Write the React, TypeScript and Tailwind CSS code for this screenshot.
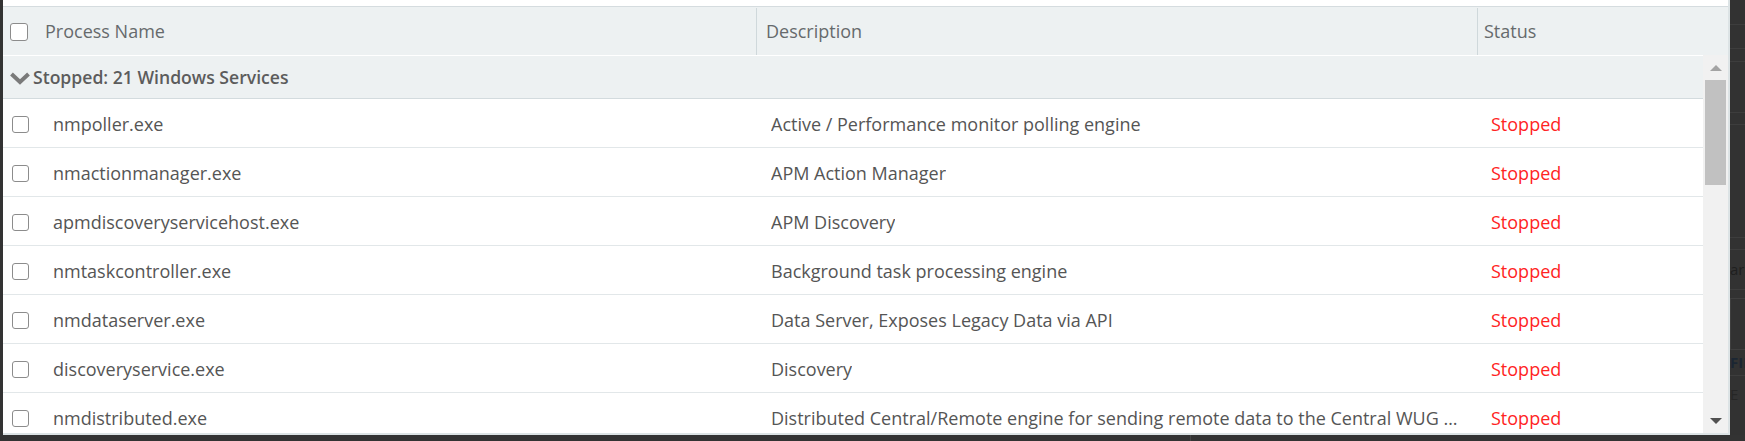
import React from 'react'

interface ServiceRow {
  name: string
  description: string
}

const rows: ServiceRow[] = [
  { name: 'nmpoller.exe', description: 'Active / Performance monitor polling engine' },
  { name: 'nmactionmanager.exe', description: 'APM Action Manager' },
  { name: 'apmdiscoveryservicehost.exe', description: 'APM Discovery' },
  { name: 'nmtaskcontroller.exe', description: 'Background task processing engine' },
  { name: 'nmdataserver.exe', description: 'Data Server, Exposes Legacy Data via API' },
  { name: 'discoveryservice.exe', description: 'Discovery' },
  {
    name: 'nmdistributed.exe',
    description: 'Distributed Central/Remote engine for sending remote data to the Central WUG\u00a0server',
  },
]

function Checkbox({ size = 'body' }: { size?: 'header' | 'body' }) {
  return (
    <span
      className={`inline-block shrink-0 rounded-[3px] border border-[#8c8c8c] bg-white ${
        size === 'header' ? 'h-[18px] w-[18px]' : 'h-[17px] w-[17px]'
      }`}
    />
  )
}

function ChevronDown() {
  return (
    <svg width="24" height="14" viewBox="0 0 24 14" className="shrink-0">
      <polyline
        points="3.5,3 12,11 20.5,3"
        fill="none"
        stroke="#7a7a7a"
        strokeWidth="4"
        strokeLinejoin="miter"
      />
    </svg>
  )
}

function Scrollbar() {
  return (
    <div className="flex w-[25px] shrink-0 flex-col bg-[#f1f1f1]">
      <div className="flex h-[25px] items-center justify-center">
        <svg width="14" height="8" viewBox="0 0 14 8">
          <polygon points="7,1 13,7 1,7" fill="#a3a3a3" />
        </svg>
      </div>
      <div className="mx-[2px] h-[105px] bg-[#c1c1c1]" />
      <div className="flex-1" />
      <div className="flex h-[25px] items-center justify-center">
        <svg width="14" height="8" viewBox="0 0 14 8">
          <polygon points="1,1 13,1 7,7" fill="#505050" />
        </svg>
      </div>
    </div>
  )
}

function BackdropStrip() {
  // bits of the page behind the dialog, peeking out on the right
  return (
    <div className="flex w-[16px] flex-col overflow-hidden bg-[#323232] text-[15px] font-['Open_Sans',sans-serif]">
      <div className="h-[25px] border-b border-[#3d3d3d]" />
      <div className="h-[24px] border-b border-[#3d3d3d]" />
      <div className="h-[13px] border-b border-[#3d3d3d]" />
      <div className="h-[51px] border-b border-[#3d3d3d]" />
      <div className="h-[12px] border-b border-[#3d3d3d]" />
      <div className="h-[113px] border-b border-[#3d3d3d]" />
      <div className="h-[12px] border-b border-[#3d3d3d]" />
      <div className="flex h-[40px] items-center border-b border-[#3d3d3d] whitespace-nowrap text-[#1f1f1f]">
        ard
      </div>
      <div className="h-[8px]" />
      <div className="mr-[-2px] h-[52px] border border-[#3f3f3f]" />
      <div className="flex h-[26px] items-center border-b border-[#3d3d3d] whitespace-nowrap font-bold text-[#1b2633]">
        FIL
      </div>
      <div className="flex h-[36px] items-center whitespace-nowrap text-[#262626]">E</div>
    </div>
  )
}

export default function App() {
  return (
    <div className="flex h-[441px] w-[1745px] flex-col overflow-hidden bg-[#333333] font-['Open_Sans',sans-serif]">
      <div className="flex h-[435px]">
        <div className="w-[3px] shrink-0" />

        {/* dialog panel */}
        <div className="flex w-[1727px] shrink-0 flex-col border-r-2 border-b-2 border-[#dce3e5] bg-white">
          <div className="h-[6px] bg-white" />

          {/* column header */}
          <div className="grid h-[49px] shrink-0 grid-cols-[753px_721px_1fr] border-t border-[#d5dcdf] bg-[#edf1f2] pt-[1px] text-[18px] text-[#666a6c]">
            <div className="flex items-center gap-[17px] pl-[7px]">
              <Checkbox size="header" />
              <span>Process Name</span>
            </div>
            <div className="flex items-center border-l border-[#cfd8db] pl-[9px]">Description</div>
            <div className="flex items-center border-l border-[#cfd8db] pl-[6px]">Status</div>
          </div>

          {/* grouped rows + scrollbar */}
          <div className="flex h-[378px] overflow-hidden">
            <div className="flex-1 overflow-hidden">
              <div className="flex h-[44px] items-center gap-[1px] border-t border-b border-t-white border-b-[#d3dbde] bg-[#edf1f2] pt-[1px] pl-[5px] text-[17.6px] font-semibold text-[#5c5c5c]">
                <ChevronDown />
                <span>Stopped: 21 Windows Services</span>
              </div>

              {rows.map((row) => (
                <div
                  key={row.name}
                  className="grid h-[49px] shrink-0 grid-cols-[753px_721px_1fr] border-b border-[#e2e7e9] pt-[3px] text-[18px]"
                >
                  <div className="flex items-center gap-[24px] pl-[9px] text-[#555555]">
                    <Checkbox />
                    <span>{row.name}</span>
                  </div>
                  <div className="flex items-center overflow-hidden pr-[19px] pl-[15px] text-[#555555]">
                    <span className="truncate">{row.description}</span>
                  </div>
                  <div className="flex items-center pl-[14px] text-[#ff2323]">Stopped</div>
                </div>
              ))}
            </div>
            <Scrollbar />
          </div>
        </div>

        <BackdropStrip />
      </div>

      {/* strip of the page below the dialog */}
      <div className="flex h-[6px] overflow-hidden">
        <div className="w-[1190px] shrink-0" />
        <div className="w-px bg-[#454545]" />
        <div className="pl-[19px] pt-[1px] text-[15px] leading-[20px] whitespace-nowrap text-[#8a8a8a]">
          Results 1-5 of 100 in 0.03 seconds
        </div>
      </div>
    </div>
  )
}
